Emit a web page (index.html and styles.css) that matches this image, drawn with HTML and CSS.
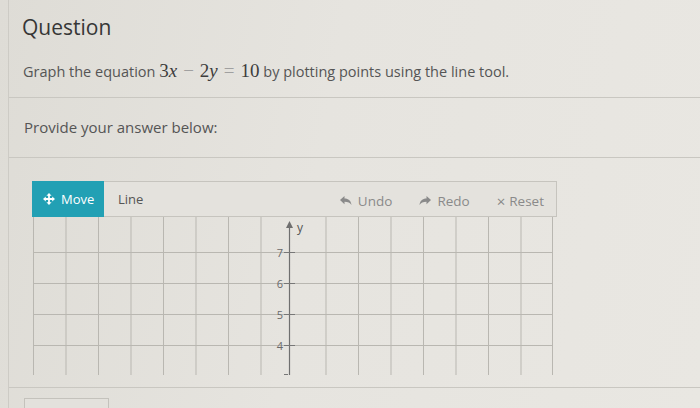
FILE: index.html
```html
<!DOCTYPE html>
<html>
<head>
<meta charset="utf-8">
<link rel="stylesheet" href="styles.css">
</head>
<body>
<div class="panel">
  <h1 class="title">Question</h1>
  <p class="prompt">Graph the equation <span class="math"><span class="up">3</span><i>x</i><span class="op">−</span><span class="up">2</span><i>y</i><span class="op">=</span><span class="up">10</span></span> by plotting points using the line tool.</p>
  <div class="rule"></div>
  <p class="answer">Provide your answer below:</p>
  <div class="rule rule2"></div>
  <div class="graph">
    <div class="toolbar">
      <button class="tool active">
        <svg class="ico" viewBox="0 0 12 12" width="12" height="12"><path d="M6 0 L8.6 2.8 H6.9 V5.1 H9.2 V3.4 L12 6 L9.2 8.6 V6.9 H6.9 V9.2 H8.6 L6 12 L3.4 9.2 H5.1 V6.9 H2.8 V8.6 L0 6 L2.8 3.4 V5.1 H5.1 V2.8 H3.4 Z" fill="#fff"/></svg>
        Move
      </button>
      <button class="tool">Line</button>
      <div class="spacer"></div>
      <button class="act"><svg class="ico2" viewBox="0 0 12 10" width="12" height="10"><path d="M0 4 L4.5 0 V2.4 C8.5 2.4 11 4.6 11.5 9 C10 6.6 8 5.8 4.5 5.8 V8.2 Z" fill="#8a8a8a"/></svg>Undo</button>
      <button class="act"><svg class="ico2" viewBox="0 0 12 10" width="12" height="10"><path d="M12 4 L7.5 0 V2.4 C3.5 2.4 1 4.6 0.5 9 C2 6.6 4 5.8 7.5 5.8 V8.2 Z" fill="#8a8a8a"/></svg>Redo</button>
      <button class="act"><span class="x">×</span>Reset</button>
    </div>
    <div class="canvas">
      <svg width="520" height="158" viewBox="0 0 520 158">
        <g stroke="#b9b7b1" stroke-width="1">
          <line x1="0.5" y1="0" x2="0.5" y2="158"/>
          <line x1="33" y1="0" x2="33" y2="158"/>
          <line x1="65.5" y1="0" x2="65.5" y2="158"/>
          <line x1="98" y1="0" x2="98" y2="158"/>
          <line x1="130.5" y1="0" x2="130.5" y2="158"/>
          <line x1="163" y1="0" x2="163" y2="158"/>
          <line x1="195.5" y1="0" x2="195.5" y2="158"/>
          <line x1="228" y1="0" x2="228" y2="158"/>
          <line x1="293" y1="0" x2="293" y2="158"/>
          <line x1="325.5" y1="0" x2="325.5" y2="158"/>
          <line x1="358" y1="0" x2="358" y2="158"/>
          <line x1="390.5" y1="0" x2="390.5" y2="158"/>
          <line x1="423" y1="0" x2="423" y2="158"/>
          <line x1="455.5" y1="0" x2="455.5" y2="158"/>
          <line x1="488" y1="0" x2="488" y2="158"/>
          <line x1="519.5" y1="0" x2="519.5" y2="158"/>
          <line x1="0" y1="35.5" x2="520" y2="35.5"/>
          <line x1="0" y1="66.5" x2="520" y2="66.5"/>
          <line x1="0" y1="97.5" x2="520" y2="97.5"/>
          <line x1="0" y1="128.5" x2="520" y2="128.5"/>
        </g>
        <line x1="256.5" y1="10" x2="256.5" y2="158" stroke="#6f6f6f" stroke-width="1.2"/>
        <path d="M256.5 4 L260 11 H253 Z" fill="#6f6f6f"/>
        <g stroke="#777" stroke-width="1">
          <line x1="251" y1="35.5" x2="262" y2="35.5"/>
          <line x1="251" y1="66.5" x2="262" y2="66.5"/>
          <line x1="251" y1="97.5" x2="262" y2="97.5"/>
          <line x1="251" y1="128.5" x2="262" y2="128.5"/>
          <line x1="251" y1="157.5" x2="255" y2="157.5"/>
        </g>
        <g class="lbl" font-size="11" fill="#6a6a6a" text-anchor="end">
          <text x="250" y="39.5">7</text>
          <text x="250" y="70.5">6</text>
          <text x="250" y="101.5">5</text>
          <text x="250" y="132.5">4</text>
        </g>
        <text class="lbl" x="264" y="15" font-size="12" fill="#555">y</text>
      </svg>
    </div>
  </div>
  <div class="rule rule3"></div>
  <button class="check">Check</button>
</div>
</body>
</html>
```

FILE: styles.css
```css
html, body {
  margin: 0;
  padding: 0;
}
body {
  width: 700px;
  height: 408px;
  overflow: hidden;
  background: linear-gradient(100deg, #dedcd6 0%, #e6e4df 45%, #e9e7e2 100%);
  font-family: "Open Sans", "Noto Sans", sans-serif;
}
.panel {
  margin-left: 8px;
  border-left: 1px solid #cdcbc5;
  height: 408px;
  padding-left: 13px;
  box-sizing: border-box;
}
.title {
  margin: 0;
  padding-top: 12px;
  font-size: 21px;
  line-height: 30px;
  font-weight: 400;
  color: #363636;
}
.prompt {
  margin: 18px 0 0 1px;
  font-size: 14.5px;
  line-height: 22px;
  color: #555;
}
.math {
  font-family: "Liberation Serif", "DejaVu Serif", serif;
  font-size: 19px;
  color: #3d3d3d;
}
.math i {
  font-style: italic;
}
.op {
  margin: 0 6px;
  color: #a0a0a0;
}
.rule {
  margin: 14px 0 0 -13px;
  height: 1px;
  background: #c9c7c1;
}
.answer {
  margin: 18px 0 0 2px;
  font-size: 15px;
  line-height: 22px;
  color: #555;
}
.rule2 {
  margin-top: 19px;
}
.graph {
  margin: 23px 0 0 10px;
  width: 525px;
}
.toolbar {
  display: flex;
  align-items: stretch;
  height: 36px;
  border: 1px solid #c6c4be;
  background: #e4e2dd;
  box-sizing: border-box;
}
.tool, .act, .check {
  font-family: "Open Sans", "Noto Sans", sans-serif;
  border: 0;
  background: none;
  padding: 0;
  cursor: pointer;
}
.tool {
  font-size: 13px;
  color: #555;
  padding: 0 14px;
  display: flex;
  align-items: center;
}
.tool.active {
  background: #22a0b4;
  color: #fff;
  width: 72px;
  margin: -1px 0 -1px -1px;
  padding: 0 0 0 11px;
  justify-content: flex-start;
}
.ico {
  margin-right: 6px;
}
.spacer {
  flex: 1;
}
.act {
  font-size: 13.5px;
  color: #8a8a8a;
  display: flex;
  align-items: center;
  margin-left: 27px;
  padding-top: 4px;
}
.act:last-child {
  margin-right: 12px;
}
.ico2 {
  margin-right: 6px;
}
.x {
  font-size: 15px;
  margin-right: 4px;
  color: #888;
}
.canvas {
  height: 158px;
  overflow: hidden;
  margin-left: 1px;
}
.canvas svg {
  display: block;
}
.lbl {
  font-family: "Open Sans", "Noto Sans", sans-serif;
}
.rule3 {
  margin-top: 12px;
}
.check {
  display: block;
  margin: 10px 0 0 2px;
  width: 85px;
  height: 30px;
  border: 1px solid #c4c2bc;
  background: #e3e1dc;
  font-size: 14px;
  color: #444;
  padding-top: 6px;
  box-sizing: border-box;
  text-align: center;
  vertical-align: top;
}
```
